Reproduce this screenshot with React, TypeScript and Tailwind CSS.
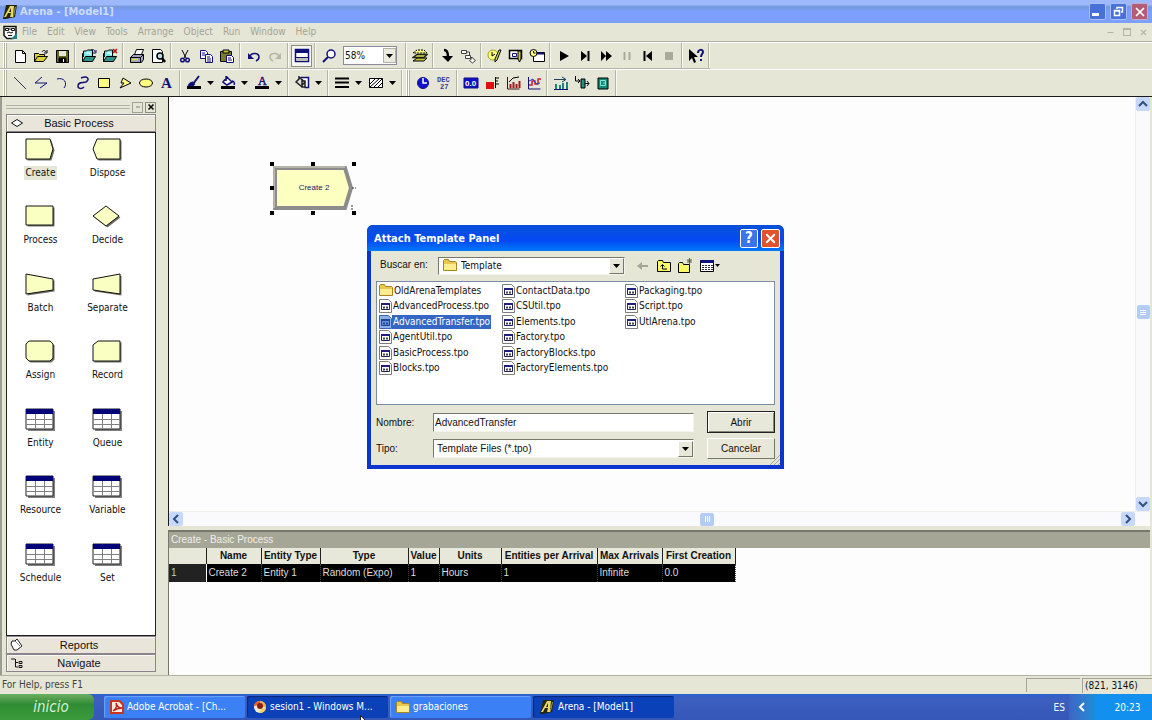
import React from 'react';
import { Minus, X } from 'lucide-react';

type Children = { children?: React.ReactNode };

function Ico({ children }: Children) {
  return (
    <svg width="16" height="16" viewBox="0 0 16 16" fill="none" stroke="#000" strokeWidth="1" aria-hidden="true">
      {children}
    </svg>
  );
}

const navy = '#10107a';
const yellow = '#ffff80';

const icons: Record<string, React.ReactNode> = {
  New: <path d="M3.5 2.5h7l3 3v9h-10zM10.5 2.5v3h3" fill="#fff" />,
  Open: <><path d="M1.5 13.5v-8h4l1 1h5v2M1.5 13.5l3-5h10l-4 5z" fill="#d8d040" /><path d="M9 4c1-2 3-2 4 0m1-2v3h-3" /></>,
  Save: <><path d="M2.5 2.5h12v12h-12z" fill="#6b6b20" /><path d="M5 3h7v5h-7z" fill="#e6e6d6" stroke="none" /><path d="M5 10h7v4h-7z" fill="#000" /><path d="M9.5 11v3" stroke="#fff" /></>,
  'Template Attach': <><path d="M2.5 9v-6h3l1-1h5v7" fill="#80e8e8" /><path d="M1.5 13.5v-8h1M1.5 13.5l3-5h10l-3 5z" fill="#30908c" /><path d="M5 5h4v2" stroke="#fff" /><path d="M10 2c2-1 4 0 4 2m1-2v3h-3" stroke={navy} /></>,
  'Template Detach': <><path d="M2.5 9v-6h3l1-1h4v7" fill="#80e8e8" /><path d="M1.5 13.5v-8h1M1.5 13.5l3-5h10l-3 5z" fill="#30908c" /><path d="M5 5h4v2" stroke="#fff" /><path d="M11 1l4 4m0-4l-4 4" stroke="#b01010" strokeWidth="1.5" /></>,
  Print: <><path d="M5.5 6.5l2-5h7l-2 5z" fill="#fff" /><path d="M1.5 9.5l3-3h10v5l-2 3h-11z" fill="#a0a0c4" /><path d="M1.5 9.5h10v5m0-5l3-3" /><path d="M3 11.5h6" stroke="#e0e040" strokeWidth="1.5" /></>,
  'Print Preview': <><path d="M2.5 1.5h8l2 2v11h-10z" fill="#fff" /><circle cx="10" cy="8" r="3" fill="#b8e0e0" strokeWidth="1.5" /><path d="M12 10l3 4" strokeWidth="2.5" /></>,
  Cut: <><path d="M5 2l4 8M11 2L7 10" /><circle cx="5.5" cy="12" r="1.8" stroke={navy} strokeWidth="1.5" /><circle cx="10.5" cy="12" r="1.8" stroke={navy} strokeWidth="1.5" /></>,
  Copy: <><path d="M2.5 2.5h5l2 2v6h-7z" fill="#fff" stroke={navy} /><path d="M7.5 6.5h5l2 2v6h-7z" fill="#fff" stroke={navy} /><path d="M4 5h3M4 7h3M9 9h3m-3 2h4m-4 2h4" stroke={navy} /></>,
  Paste: <><path d="M1.5 3.5h11v10h-11z" fill="#7c7c28" /><path d="M4 2h6v3h-6z" fill="#c8c840" /><path d="M7.5 7.5h5l2 2v5h-7z" fill="#fff" stroke={navy} /><path d="M9 10h3m-3 2h4" stroke={navy} /></>,
  Undo: <><path d="M4 8c2-4 9-3 9 1 0 2-1 3-3 4" stroke={navy} strokeWidth="1.5" /><path d="M2 5v6h6z" fill={navy} stroke="none" /></>,
  Redo: <><path d="M12 8c-2-4-9-3-9 1 0 2 1 3 3 4" stroke="#b6b6a8" strokeWidth="1.5" /><path d="M14 5v6h-6z" fill="#b6b6a8" stroke="none" /></>,
  'Split Screen': <><path d="M1.5 1.5h13v12h-13z" fill="#fff" stroke={navy} strokeWidth="1.5" /><path d="M1 1h14v4H1z" fill={navy} stroke="none" /><path d="M2 9.5h12" stroke={navy} /><path d="M3 10h10v3H3z" fill="#c0c0b0" stroke="none" /></>,
  Zoom: <><circle cx="10" cy="6" r="4" fill="#fff" stroke={navy} strokeWidth="1.5" /><path d="M7 9l-5 5" stroke={navy} strokeWidth="2" /></>,
  Layers: <><path d="M1 13l4-3h10l-3 3z" fill="#c8c830" /><path d="M1 9.5l4-3h10l-3 3z" fill="#e0e040" stroke="#222" strokeWidth="1.500" /><path d="M1 5l4-3h7l3 3z" fill={yellow} strokeDasharray="2 1" /></>,
  Submodel: <><path d="M5 2c3 0 4 2 4 7" strokeWidth="2.5" /><path d="M3 8h11l-5 6z" fill="#000" stroke="none" /></>,
  Connect: <path d="M1.5 2.5h5v3h-5zM6.5 4h3v3M5.5 7.5h5v3h-5zM10.5 9.5h2M12.5 10l3 2.500-3 2.500-3-2.500z" fill="#fff" stroke="#404040" />,
  'Run Setup': <><circle cx="6" cy="7" r="5" fill={yellow} stroke="#a0a020" /><path d="M5 4v4l3-2" /><path d="M14 2l-4 10-2 2 0-3 4-9z" fill="#e0e060" /></>,
  'Check Model': <><path d="M1.5 2.5h12v8h-12z" fill="#fff" strokeWidth="1.5" /><path d="M4.500 5.500h4v3h-4z" stroke={navy} /><path d="M10 3h3v8l-1.500 3L10 11z" fill="#d8c820" /></>,
  'Run Control': <><path d="M4.5 4.5h11v9h-11z" fill="#fff" /><path d="M8 5.5h7" stroke={navy} strokeWidth="2" /><circle cx="4.5" cy="5" r="3.5" fill={yellow} /><path d="M4.5 3v2h2" /></>,
  Go: <path d="M4 3l9 5-9 5z" fill="#000" stroke="none" />,
  Step: <><path d="M4 3l6 5-6 5z" fill="#000" stroke="none" /><path d="M11.5 3v10" strokeWidth="2" /></>,
  'Fast Forward': <path d="M3 3l5 5-5 5zM8 3l6 5-6 5z" fill="#000" stroke="none" />,
  Pause: <path d="M5.5 4v8M10.5 4v8" stroke="#aaaa9c" strokeWidth="2" />,
  'Start Over': <><path d="M12 3L6 8l6 5z" fill="#000" stroke="none" /><path d="M4.5 3v10" strokeWidth="2" /></>,
  End: <path d="M4 4h8v8H4z" fill="#aaaa9c" stroke="none" />,
  'Context Help': <><path d="M1 1v12l3-3 2 5 2-1-2-5h4z" fill="#000" stroke="none" /><path d="M10 5c0-4 5-4 5-1 0 2-2 2-2 5m0 2v2" stroke={navy} strokeWidth="2" /></>,
  Line: <path d="M2 2l12 12" stroke="#303050" />,
  Polyline: <path d="M9 2L2 8h12l-7 5" stroke={navy} />,
  Arc: <path d="M3 4c7-2 11 4 7 9" stroke={navy} />,
  Bezier: <path d="M6 3c7-3 9 2 5 4-4 1-8 0-8 4 0 3 4 3 6 1" stroke={navy} strokeWidth="1.5" />,
  Box: <path d="M2.5 3.5h11v9h-11z" fill={yellow} />,
  Polygon: <path d="M6 3l8 5-11 5 4-5H4z" fill={yellow} />,
  Ellipse: <ellipse cx="8" cy="8" rx="6.5" ry="4" fill={yellow} />,
  Text: <text x="2" y="13" fontSize="15" fontWeight="700" fontFamily="Liberation Serif, serif" fill={navy} stroke="none">A</text>,
  'Line Color': <><path d="M13 1L7 9M3 10c2-3 4-3 5-1-1 2-3 2-5 1z" fill={navy} stroke={navy} strokeWidth="2" /><path d="M1 11h14v3H1z" fill="#000" stroke="none" /></>,
  'Fill Color': <><path d="M3 7l4-5 5 5-5 3zM6 6V1m6 5c2 0 3 2 2 4" fill="#fff" stroke={navy} strokeWidth="1.5" /><path d="M1 11h14v3H1z" fill="#000" stroke="none" /></>,
  'Text Color': <><text x="4" y="10" fontSize="12" fontFamily="Liberation Serif, serif" fill={navy} stroke={navy} strokeWidth="0.5">A</text><path d="M1 11h14v3H1z" fill="#000" stroke="none" /></>,
  'Window Background': <><path d="M6.5 2.5h8v10h-4" fill="#fff" stroke={navy} strokeWidth="1.5" /><path d="M2 7l4-4 5 4-4 4zM5 5V1M8 6v6h3V6z" fill="#dcdcdc" stroke="#222" strokeWidth="1.5" /></>,
  'Line Style': <path d="M1 3.5h14M1 7.5h14M1 12h14" strokeWidth="2" />,
  'Fill Pattern': <><path d="M1.5 3.5h13v9h-13z" fill="#fff" /><path d="M2 9l5-5M2 12l9-8M6 12l8-8M10 12l4-4" /></>,
  Clock: <><circle cx="8" cy="8" r="5.5" fill="#1010d0" stroke="#101090" /><path d="M8 3v5h4" stroke="#fff" strokeWidth="1.5" /></>,
  Date: <><text x="1" y="7" fontSize="7" fontWeight="700" fontFamily="Liberation Mono, monospace" fill="#3838a0" stroke="none">DEC</text><text x="4" y="14" fontSize="7" fontWeight="700" fontFamily="Liberation Mono, monospace" fill="#3838a0" stroke="none">27</text></>,
  Variable: <><path d="M1 3h14v10H1z" fill="#1010c8" stroke="#101080" /><text x="2" y="11" fontSize="8" fontWeight="700" fontFamily="Liberation Sans, sans-serif" fill="#fff" stroke="none">0.0</text></>,
  Level: <><path d="M2 7h8v7H2z" fill="#e01010" stroke="none" /><path d="M11.5 2v11M11 3h4M12 6h2m-2 3h3" /></>,
  Histogram: <><path d="M2.5 2v12h12" stroke="#401010" /><path d="M5.5 9v4m3-6v6m3-4v4m3-7v7" stroke="#a01818" strokeWidth="2" /><path d="M4 7l4-4 6-1" /></>,
  Plot: <><path d="M2.5 2v12h12" stroke={navy} /><path d="M3 10h3V6h3v3h3V4h3" stroke="#d02020" strokeWidth="1.5" /><path d="M3 6l4-2 3 5 4-1" stroke="#3838d0" /></>,
  Queue: <><path d="M1 4.5h11M9 2l4 2.500L9 7" stroke="#204060" /><path d="M3 9v5m4-4v4m3-6v6m4-7v7" stroke="#208080" strokeWidth="2" /><path d="M1 14.5h14" stroke={navy} /></>,
  Transfer: <><path d="M7 4h4v9H7z" fill="#209080" /><path d="M1.5 1v5h4M4 4l2 2-2 2M11 8.500h4M13 6l2 2.500L13 11" /></>,
  Resource: <><path d="M3 3h10v11H3z" fill="#108878" /><path d="M5.5 5.5h5v5h-5z" stroke="#80e8d8" /><path d="M8 8h3" stroke="#80e8d8" /></>,
};

function ToolButton({ name, pressed }: { name: string; pressed?: boolean }) {
  return (
    <button
      aria-label={name}
      className={`flex h-[22px] w-[21px] shrink-0 items-center justify-center ${pressed ? 'border border-[#8c8c80] bg-[#f6f6f2]' : ''}`}
    >
      <Ico>{icons[name]}</Ico>
    </button>
  );
}

function Caret() {
  return (
    <svg width="7" height="4" viewBox="0 0 7 4" aria-hidden="true">
      <path d="M0 0h7L3.500 4z" fill="#000" />
    </svg>
  );
}

function DropTool({ name }: { name: string }) {
  return (
    <div className="flex w-[34px] shrink-0 items-center">
      <ToolButton name={name} />
      <button aria-label={`${name} options`} className="flex h-[22px] w-[13px] items-center justify-center">
        <Caret />
      </button>
    </div>
  );
}

function Group({ children }: Children) {
  return <div className="mr-px flex h-full items-center border-r border-[#b4b4a6] px-0.5 shadow-[1px_0_0_#fafaf4]">{children}</div>;
}

function Grip() {
  return (
    <div className="flex h-full shrink-0 pl-[3px]">
      <div className="w-0.5 border-l border-white bg-[#b4b4a6]" />
      <div className="w-0.5 border-l border-white bg-[#b4b4a6]" />
    </div>
  );
}

const tools = (names: string[]) => names.map((n) => <ToolButton key={n} name={n} />);

function ArenaLogo() {
  return (
    <svg width="16" height="16" viewBox="0 0 16 16" className="shrink-0" aria-hidden="true">
      <path d="M4 1h11l-2 12-9 2H1z" fill="#26260e" />
      <path d="M8 2h4l-1 11H8l1-4H6l-2 4H2z" fill="#e8d860" />
      <path d="M9 4L7 8h2z" fill="#222" />
      <path d="M13 3h1l-2 9-1 1z" fill="#98a070" />
    </svg>
  );
}

function TitleBar() {
  return (
    <header className="flex h-[23px] shrink-0 items-center bg-linear-to-b from-[#9db9fc] from-20% via-[#7398dc] via-30% to-[#7d9ffc] to-50% pr-1 pl-0.5">
      <ArenaLogo />
      <h1 className="ml-0.5 flex-1 text-[11px] leading-4 font-bold text-[#cbdcfb]">Arena - [Model1]</h1>
      <div className="flex gap-1">
        <button aria-label="Minimize" className="flex h-[17px] w-[17px] items-end rounded-xs border border-[#a8c0f8] bg-[#4870d8] p-0.5">
          <span className="mb-px h-[3px] w-[7px] bg-white" />
        </button>
        <button aria-label="Restore" className="flex h-[17px] w-[17px] items-center justify-center rounded-xs border border-[#a8c0f8] bg-[#4870d8]">
          <svg width="11" height="11" viewBox="0 0 11 11" fill="none" stroke="#fff" aria-hidden="true">
            <path d="M4 3V1.500h5.500V6H8M1.500 4.500h5v5h-5zM1.500 5h5" strokeWidth="1.5" />
          </svg>
        </button>
        <button aria-label="Close" className="flex h-[17px] w-[17px] items-center justify-center rounded-xs border border-[#c8a8c8] bg-[#b45c74] text-white">
          <X size={14} strokeWidth={3} />
        </button>
      </div>
    </header>
  );
}

const menus = ['File', 'Edit', 'View', 'Tools', 'Arrange', 'Object', 'Run', 'Window', 'Help'];

function MenuBar() {
  return (
    <nav className="flex h-[19px] shrink-0 items-center border-b border-[#b4b4a6] pr-1 pl-[3px] text-[#a3a396]">
      <svg width="15" height="15" viewBox="0 0 15 15" fill="#fff" stroke="#111" aria-hidden="true">
        <path d="M1 1.500h12v9l-3 3H4l-3-3z" strokeWidth="1.5" />
        <path d="M9 13l5-5v6H8z" fill="#208080" stroke="none" />
        <path d="M2.500 3.500h3v2h-3zM8.500 3.500h3v2h-3zM5.500 4h3M4 8l2-1 2 1 2-1M5 10.500h4" />
      </svg>
      <div className="flex flex-1 gap-2.5 pl-1">
        {menus.map((m) => (
          <button key={m} className="leading-4">{m}</button>
        ))}
      </div>
      <div className="flex items-center gap-2 text-[#b4b4a6]">
        <button aria-label="Minimize model"><Minus size={9} strokeWidth={3} /></button>
        <button aria-label="Restore model" className="h-2 w-2 border border-t-2 border-[#b4b4a6]" />
        <button aria-label="Close model"><X size={9} strokeWidth={3} /></button>
      </div>
    </nav>
  );
}

function Toolbars() {
  return (
    <div className="shrink-0 border-b border-[#1a1a1a]">
      <div className="flex h-[27px] border-t border-white">
        <div className="flex border-b border-[#b4b4a6]">
          <Grip />
          <Group>{tools(['New', 'Open', 'Save'])}</Group>
          <Group>{tools(['Template Attach', 'Template Detach'])}</Group>
          <Group>{tools(['Print', 'Print Preview'])}</Group>
          <Group>{tools(['Cut', 'Copy', 'Paste'])}</Group>
          <Group>{tools(['Undo', 'Redo'])}</Group>
          <Group><ToolButton name="Split Screen" pressed /></Group>
          <Group>
            <ToolButton name="Zoom" />
            <div className="mr-1.5 ml-1 flex h-[19px] w-[54px] items-center border border-[#8c8c98] bg-white">
              <select aria-label="Zoom level" className="min-w-0 flex-1 appearance-none pl-px">
                <option>58%</option>
              </select>
              <span className="pointer-events-none flex h-[15px] w-[13px] items-center justify-center border border-[#b4b4a6] bg-[#ebebdf]"><Caret /></span>
            </div>
          </Group>
          <Group>{tools(['Layers'])}</Group>
          <Group>{tools(['Submodel', 'Connect'])}</Group>
          <Group>{tools(['Run Setup', 'Check Model', 'Run Control'])}</Group>
          <Group>{tools(['Go', 'Step', 'Fast Forward', 'Pause', 'Start Over', 'End'])}</Group>
          <Group>{tools(['Context Help'])}</Group>
        </div>
      </div>
      <div className="flex h-[27px] border-t border-white">
        <Grip />
        <Group>{tools(['Line', 'Polyline', 'Arc', 'Bezier', 'Box', 'Polygon', 'Ellipse', 'Text'])}</Group>
        <Group>
          <DropTool name="Line Color" />
          <DropTool name="Fill Color" />
          <DropTool name="Text Color" />
        </Group>
        <Group><DropTool name="Window Background" /></Group>
        <Group>
          <DropTool name="Line Style" />
          <DropTool name="Fill Pattern" />
        </Group>
        <Grip />
        <Group>{tools(['Clock', 'Date'])}</Group>
        <Group>{tools(['Variable', 'Level', 'Histogram', 'Plot'])}</Group>
        <Group>{tools(['Queue', 'Transfer', 'Resource'])}</Group>
      </div>
    </div>
  );
}

const shapes: Record<string, string> = {
  Create: 'M1 1h24l3 10-3 10H1z',
  Dispose: 'M5 1h23v20H5L1 11z',
  Process: 'M1 1h27v19H1z',
  Decide: 'M14 1l13 10-13 10L1 11z',
  Batch: 'M1 1l27 5v11L1 21z',
  Separate: 'M28 1v20L1 17V6z',
  Assign: 'M4 1h21l3 3v14l-3 3H4l-3-3V4z',
  Record: 'M6 1h22v20H1V5z',
};

const modules = [
  'Create', 'Dispose', 'Process', 'Decide', 'Batch', 'Separate', 'Assign', 'Record',
  'Entity', 'Queue', 'Resource', 'Variable', 'Schedule', 'Set',
];

function ModuleIcon({ name }: { name: string }) {
  const d = shapes[name];
  return (
    <svg width="31" height="24" viewBox="0 0 31 24" aria-hidden="true">
      {d ? (
        <>
          <path d={d} transform="translate(1.5 1.5)" fill="#70706a" />
          <path d={d} fill="#faffc2" stroke="#111" strokeWidth="1" />
        </>
      ) : (
        <>
          <path d="M3 3h27v20H3z" fill="#808080" />
          <path d="M1 1h27v20H1z" fill="#fff" stroke="#222" />
          <path d="M1 1h27v5H1z" fill="#000078" />
          <path d="M1 11.500h27M1 16.500h27M10.500 6v15M19.500 6v15" stroke="#808080" />
        </>
      )}
    </svg>
  );
}

function SideTab({ title, children }: { title: string } & Children) {
  return (
    <button className="flex h-[18px] w-full shrink-0 items-center border border-[#8c848c] bg-[#e9e5da] font-['Liberation_Sans',sans-serif] text-[11px] leading-4 shadow-[inset_1px_1px_0_#fafaf4]">
      <span className="flex w-5 justify-center">{children}</span>
      <span className="flex-1 pr-6 text-center">{title}</span>
    </button>
  );
}

function Sidebar() {
  return (
    <aside className="flex w-[168px] shrink-0 flex-col border-l-2 border-[#9c9c90] pt-[3px] pr-3 pb-[3px] pl-1">
      <div className="flex h-[14px] shrink-0 items-center gap-0.5">
        <div className="h-1 flex-1 border-y border-[#b4b4a6]" />
        <button aria-label="Panel menu" className="flex h-[11px] w-[11px] items-center justify-center border border-[#a0a094]">
          <span className="h-0.5 w-1 bg-[#b4b4a6]" />
        </button>
        <button aria-label="Close panel" className="flex h-[11px] w-[11px] items-center justify-center border border-[#8c8c80]"><X size={8} strokeWidth={5} /></button>
      </div>
      <SideTab title="Basic Process">
        <svg width="12" height="8" viewBox="0 0 12 8" aria-hidden="true"><path d="M6 .5L11.500 4 6 7.500.5 4z" fill="#fff" stroke="#111" /></svg>
      </SideTab>
      <div className="grid min-h-0 flex-1 auto-rows-fr grid-cols-[67px_67px] border border-[#222] bg-white pb-[30px]">
        {modules.map((m, i) => (
          <button key={m} className="flex flex-col items-center pt-[5px]">
            <ModuleIcon name={m} />
            <span className={`mt-1 px-0.5 leading-[14px] ${i === 0 ? 'bg-[#e6e6d6]' : ''}`}>{m}</span>
          </button>
        ))}
      </div>
      <SideTab title="Reports">
        <svg width="14" height="14" viewBox="0 0 14 14" aria-hidden="true"><path d="M2 3h3l2-2 5 7-5 4H4L1 6z" fill="#fff" stroke="#222" /><path d="M5 3l5 5" stroke="#888" /></svg>
      </SideTab>
      <SideTab title="Navigate">
        <svg width="12" height="12" viewBox="0 0 12 12" fill="none" stroke="#111" aria-hidden="true"><path d="M0 2h4M4.500 2v8H7M4.500 5.500H7M8 4.500h3v2H8zM8 8.500h3v2H8z" /></svg>
      </SideTab>
    </aside>
  );
}

function ScrollArrow({ label, d }: { label: string; d: string }) {
  return (
    <button aria-label={label} className="flex h-[14px] w-[14px] shrink-0 items-center justify-center rounded-xs bg-[#c6d8fc]">
      <svg width="10" height="10" viewBox="0 0 10 10" fill="none" stroke="#35507c" strokeWidth="2" aria-hidden="true"><path d={d} /></svg>
    </button>
  );
}

const handles = [
  'left-0 top-0', 'left-[41px] top-0', 'left-[82px] top-0', 'left-0 top-[24px]',
  'left-0 top-[49px]', 'left-[41px] top-[49px]', 'left-[82px] top-[49px]',
];

function CreateNode() {
  return (
    <div className="absolute top-[65px] left-[101px] h-[53px] w-[90px]">
      <svg width="90" height="53" viewBox="0 0 90 53" aria-hidden="true">
        <path d="M5 6h70l6 20-6 20H5z" fill="#fdffc0" stroke="#8c8c8c" strokeWidth="4" />
        <path d="M4 46V5h71" fill="none" stroke="#b4b4aa" strokeWidth="2" />
        <path d="M82 26h4M82 43v5" stroke="#333" strokeDasharray="2 1" />
      </svg>
      <span className="absolute inset-0 flex items-center justify-center pr-0.5 pb-0.5 font-['Liberation_Sans',sans-serif] text-[8px] leading-3 text-[#20206c]">Create 2</span>
      {handles.map((h) => (
        <span key={h} className={`absolute h-1 w-1 bg-black ${h}`} />
      ))}
    </div>
  );
}

function Folder() {
  return (
    <svg width="14" height="13" viewBox="0 0 14 13" className="shrink-0" aria-hidden="true">
      <path d="M.5 11.500v-10l1-1h4l1 2h6l1 1v8z" fill="#e8c850" stroke="#a88420" />
      <path d="M1 5h12v6H1z" fill="#fdec90" />
    </svg>
  );
}

function TpoFile({ selected }: { selected: boolean }) {
  return (
    <svg width="13" height="14" viewBox="0 0 13 14" className="shrink-0" aria-hidden="true">
      <path d="M.5.5h9l3 3v10H.5z" fill={selected ? '#8cb0ec' : '#fff'} stroke={selected ? '#3c64b0' : '#7c7c7c'} />
      <path d="M2.500 4.500h8v6h-8z" fill={selected ? '#6890dc' : '#fff'} stroke={selected ? '#204890' : '#20205c'} />
      <path d="M2 5h9" stroke={selected ? '#204890' : '#20207c'} strokeWidth="2" />
      <path d="M4 8.500h2m1 0h2" stroke={selected ? '#204890' : '#444'} strokeWidth="2" />
    </svg>
  );
}

const files = [
  'OldArenaTemplates', 'AdvancedProcess.tpo', 'AdvancedTransfer.tpo', 'AgentUtil.tpo', 'BasicProcess.tpo', 'Blocks.tpo',
  'ContactData.tpo', 'CSUtil.tpo', 'Elements.tpo', 'Factory.tpo', 'FactoryBlocks.tpo', 'FactoryElements.tpo',
  'Packaging.tpo', 'Script.tpo', 'UtlArena.tpo',
];

const sunken = 'border border-t-[#77776c] border-l-[#77776c] border-r-[#f4f4ec] border-b-[#f4f4ec] bg-white';
const raised = 'border border-t-white border-l-white border-r-[#77776c] border-b-[#77776c] bg-[#e8e8da]';

function AttachDialog() {
  return (
    <section
      aria-label="Attach Template Panel"
      className="absolute top-[128px] left-[198px] flex h-[244px] w-[417px] flex-col rounded-t-md bg-[#0a35cf] px-1 pb-1"
    >
      <div className="-mx-1 flex h-[26px] shrink-0 items-center rounded-t-md bg-linear-to-b from-[#0a50d8] via-[#0449f4] via-60% to-[#0878f8] pr-1 pl-[7px]">
        <h2 className="flex-1 pt-0.5 text-[11px] leading-4 font-bold text-white">Attach Template Panel</h2>
        <button aria-label="Help" className="mr-[3px] flex h-[19px] w-[18px] items-center justify-center rounded-xs border border-white bg-[#3a74e8] text-[15px] leading-4 font-bold text-white">?</button>
        <button aria-label="Close dialog" className="flex h-[19px] w-[19px] items-center justify-center rounded-xs border border-white bg-[#e0532c] text-white"><X size={15} strokeWidth={3} /></button>
      </div>
      <div className="relative flex-1 bg-[#e6e6d6] px-[5px] pt-[5px] font-['Liberation_Sans',sans-serif]">
        <div className="flex h-[19px] items-center">
          <label htmlFor="look-in" className="w-[62px] pb-0.5 pl-1">Buscar en:</label>
          <div className={`flex h-[18px] w-[187px] items-center pl-1 ${sunken}`}>
            <Folder />
            <select id="look-in" className="min-w-0 flex-1 appearance-none pl-1 font-['DejaVu_Sans_Condensed','DejaVu_Sans',sans-serif]">
              <option>Template</option>
            </select>
            <span className={`pointer-events-none flex h-4 w-[15px] items-center justify-center ${raised}`}><Caret /></span>
          </div>
          <div className="ml-[7px] flex">
            <button aria-label="Back" className="flex w-[21px] justify-center"><Ico><path d="M2 8l5-4v3h6v2H7v3z" fill="#a4a498" stroke="none" /></Ico></button>
            <button aria-label="Up one level" className="flex w-[21px] justify-center"><Ico><path d="M1.5 13.5v-10l1-1h4l1 2h7v9z" fill="#f8f868" /><path d="M11 11H6.500V7M4.500 8.500l2-2 2 2" /></Ico></button>
            <button aria-label="New folder" className="flex w-[21px] justify-center"><Ico><path d="M1.5 14.5v-9l1-1h3l1 2h6v8z" fill="#f8f868" /><path d="M12.500 0v6M10 3h5M10.500 1l4 4m0-4l-4 4" stroke="#60604c" /></Ico></button>
            <button aria-label="View menu" className="flex w-[28px] items-center justify-center">
              <Ico><path d="M1.5 2.5h13v11h-13z" fill="#fff" /><path d="M1 3.500h14" stroke={navy} strokeWidth="3" /><path d="M3 7.500h2m1 0h2m1 0h2m1 0h2M3 9.500h2m1 0h2m1 0h2m1 0h2M3 11.500h2m1 0h2m1 0h2m1 0h2" stroke="#333" /></Ico>
              <svg width="5" height="3" viewBox="0 0 5 3" aria-hidden="true"><path d="M0 0h5L2.500 3z" /></svg>
            </button>
          </div>
        </div>
        <div className="mt-[6px] h-[124px] border border-[#7c8ca4] bg-white pt-px pl-0.5 font-['DejaVu_Sans_Condensed','DejaVu_Sans',sans-serif]">
          <ul className="grid h-[93px] grid-flow-col grid-cols-[123px_123px_123px] grid-rows-6">
            {files.map((f) => {
              const selected = f === 'AdvancedTransfer.tpo';
              return (
                <li key={f} className="min-w-0">
                  <button className="flex h-full items-center">
                    {f.endsWith('.tpo') ? <TpoFile selected={selected} /> : <Folder />}
                    <span className={`px-px leading-[14px] ${selected ? 'bg-[#3466c4] text-white' : ''}`}>{f}</span>
                  </button>
                </li>
              );
            })}
          </ul>
        </div>
        <div className="mt-[6px] flex items-center">
          <label htmlFor="file-name" className="w-[57px]">Nombre:</label>
          <input id="file-name" defaultValue="AdvancedTransfer" className={`h-[19px] w-[261px] pl-px ${sunken}`} />
          <button className="ml-[13px] h-[22px] w-[68px] border border-[#222] bg-[#e8e8da] shadow-[inset_1px_1px_0_#fff,inset_-1px_-1px_0_#88887c]">Abrir</button>
        </div>
        <div className="mt-[5px] flex items-center">
          <label htmlFor="file-type" className="w-[57px]">Tipo:</label>
          <div className={`flex h-[19px] w-[261px] items-center ${sunken}`}>
            <select id="file-type" className="min-w-0 flex-1 appearance-none pl-[3px]">
              <option>Template Files (*.tpo)</option>
            </select>
            <span className={`pointer-events-none flex h-4 w-[15px] items-center justify-center ${raised}`}><Caret /></span>
          </div>
          <button className={`ml-[13px] h-[21px] w-[68px] ${raised}`}>Cancelar</button>
        </div>
        <svg width="10" height="10" viewBox="0 0 10 10" stroke="#a4a498" className="absolute right-0 bottom-0" aria-hidden="true">
          <path d="M0 10L10 0M4 10l6-6M8 10l2-2" />
        </svg>
      </div>
    </section>
  );
}

function Workspace() {
  return (
    <div className="flex min-h-0 flex-1 flex-col border-l border-[#1a1a1a]">
      <div className="flex min-h-0 flex-1">
        <div className="relative flex-1 bg-[#fdfdfd]">
          <CreateNode />
          <AttachDialog />
        </div>
        <div className="flex w-[15px] flex-col items-center justify-between border-l border-[#eeeeea] bg-[#fafafc]">
          <ScrollArrow label="Scroll up" d="M1 7l4-4 4 4" />
          <div className="mt-4 flex h-[14px] w-[13px] flex-col items-center justify-center gap-px rounded-xs bg-[#b4ccf8]">
            <span className="h-px w-1.5 bg-white" />
            <span className="h-px w-1.5 bg-white" />
            <span className="h-px w-1.5 bg-white" />
          </div>
          <ScrollArrow label="Scroll down" d="M1 3l4 4 4-4" />
        </div>
      </div>
      <div className="flex h-[15px] shrink-0 items-center justify-between border-t border-[#eeeeea] bg-[#fafafc] pr-[15px]">
        <ScrollArrow label="Scroll left" d="M7 1L3 5l4 4" />
        <div className="ml-[110px] flex h-[13px] w-[14px] items-center justify-center gap-px rounded-xs bg-[#b4ccf8]">
          <span className="h-1.5 w-px bg-white" />
          <span className="h-1.5 w-px bg-white" />
          <span className="h-1.5 w-px bg-white" />
        </div>
        <ScrollArrow label="Scroll right" d="M3 1l4 4-4 4" />
      </div>
    </div>
  );
}

const columns = [
  { title: 'Name', value: 'Create 2', width: 'w-[55px]' },
  { title: 'Entity Type', value: 'Entity 1', width: 'w-[59px]' },
  { title: 'Type', value: 'Random (Expo)', width: 'w-[88px]' },
  { title: 'Value', value: '1', width: 'w-[31px]' },
  { title: 'Units', value: 'Hours', width: 'w-[62px]' },
  { title: 'Entities per Arrival', value: '1', width: 'w-[96px]' },
  { title: 'Max Arrivals', value: 'Infinite', width: 'w-[65px]' },
  { title: 'First Creation', value: '0.0', width: 'w-[73px]' },
];

function Spreadsheet() {
  return (
    <div className="h-[145px] shrink-0 border-t-2 border-l border-[#77776c] bg-[#fdfdfd] font-['Liberation_Sans',sans-serif]">
      <div className="h-4 bg-[#a6a696] pl-0.5 leading-4 text-[#f0f0e8]">Create - Basic Process</div>
      <table className="w-[566px] table-fixed border-collapse whitespace-nowrap">
        <thead>
          <tr className="h-4 bg-[#e8e8da]">
            <th className="w-[37px] border-r border-[#222]" />
            {columns.map((c) => (
              <th key={c.title} className={`border-r border-[#222] p-0 text-center leading-4 font-bold ${c.width}`}>{c.title}</th>
            ))}
          </tr>
        </thead>
        <tbody>
          <tr className="h-[18px] bg-black text-[#dcdcdc]">
            <td className="border-r border-white bg-[#222] p-0 pl-0.5 leading-4 text-[#b0d8b0]">1</td>
            {columns.map((c) => (
              <td key={c.title} className="border-r border-dotted border-[#444] p-0 pl-0.5 leading-4">{c.value}</td>
            ))}
          </tr>
        </tbody>
      </table>
    </div>
  );
}

function StatusBar() {
  return (
    <div className="flex h-[19px] shrink-0 items-center border-t border-[#b4b4a6] pl-0.5 leading-4">
      <span className="flex-1 text-[#44443c]">For Help, press F1</span>
      <span className="h-[14px] w-[54px] border-t border-l border-[#a4a498]" />
      <span className="ml-0.5 w-[70px] border-t border-l border-[#a4a498] pl-0.5 leading-[14px]">(821, 3146)</span>
    </div>
  );
}

function Task({ label, active, children }: { label: string; active?: boolean } & Children) {
  return (
    <button
      className={`flex h-[22px] w-[141px] items-center gap-[3px] rounded-xs pl-1.5 text-white ${active ? 'bg-[#0b41b8] shadow-[inset_1px_1px_1px_#06287c]' : 'bg-[#3c80f6] shadow-[inset_1px_1px_1px_#6ca4fc]'}`}
    >
      {children}
      <span className="truncate leading-4">{label}</span>
    </button>
  );
}

function TaskBar() {
  return (
    <footer className="relative flex h-[26px] shrink-0 items-center bg-linear-to-b from-[#2c60c8] via-[#3c5fc0] via-20% to-[#3558b8] text-white">
      <button className="mr-[10px] h-full w-[94px] rounded-r-md bg-linear-to-b from-[#6cae64] via-[#2f8c34] via-40% to-[#3c9c3c] pl-2 text-[15px] leading-5 italic text-[#d8f0d4]">inicio</button>
      <div className="flex flex-1 gap-0.5">
        <Task label="Adobe Acrobat - [Ch...">
          <svg width="14" height="14" viewBox="0 0 14 14" className="shrink-0" aria-hidden="true">
            <path d="M0 0h10l4 4v10H0z" fill="#c8341c" />
            <path d="M2 2h7l3 3v7H2z" fill="#f8e8e0" />
            <path d="M3 11c4-3 4-5 3-8 1 4 3 5 6 5-4 0-6 1-9 3z" fill="none" stroke="#b82818" strokeWidth="1.5" />
          </svg>
        </Task>
        <Task label="sesion1 - Windows M..." active>
          <svg width="14" height="14" viewBox="0 0 14 14" className="shrink-0" aria-hidden="true">
            <circle cx="7" cy="7" r="6" fill="#f4e8d0" />
            <path d="M1 6a6 6 0 0 1 6-5v4z" fill="#e86030" />
            <path d="M7 1a6 6 0 0 1 6 6H8z" fill="#f0a848" />
            <path d="M13 7a6 6 0 0 1-7 6l2-4z" fill="#f0d060" />
            <circle cx="7" cy="6" r="3" fill="#882018" />
          </svg>
        </Task>
        <Task label="grabaciones"><Folder /></Task>
        <Task label="Arena - [Model1]" active><ArenaLogo /></Task>
      </div>
      <span className="pr-1">ES</span>
      <button aria-label="Show hidden icons" className="flex h-full w-[26px] items-center justify-center bg-linear-to-r from-[#3c66c4] to-[#1c8cd8]">
        <svg width="8" height="10" viewBox="0 0 8 10" fill="none" stroke="#fff" strokeWidth="2" aria-hidden="true"><path d="M6 1L2 5l4 4" /></svg>
      </button>
      <time className="flex h-full w-[57px] items-center justify-center bg-[#1290f0] pl-2">20:23</time>
      <svg width="8" height="10" viewBox="0 0 8 10" className="absolute bottom-[-5px] left-[360px]" aria-hidden="true">
        <path d="M.5.5v8l2-2h4z" fill="#fff" stroke="#222" />
      </svg>
    </footer>
  );
}

export default function App() {
  return (
    <div className="flex h-screen flex-col overflow-hidden bg-[#e6e6d6] font-['DejaVu_Sans_Condensed','DejaVu_Sans',sans-serif] text-[10px] text-[#111]">
      <TitleBar />
      <MenuBar />
      <Toolbars />
      <main className="flex min-h-0 flex-1">
        <Sidebar />
        <div className="flex min-w-0 flex-1 flex-col pr-0.5">
          <Workspace />
          <div className="h-1 shrink-0" />
          <Spreadsheet />
        </div>
      </main>
      <StatusBar />
      <TaskBar />
    </div>
  );
}
